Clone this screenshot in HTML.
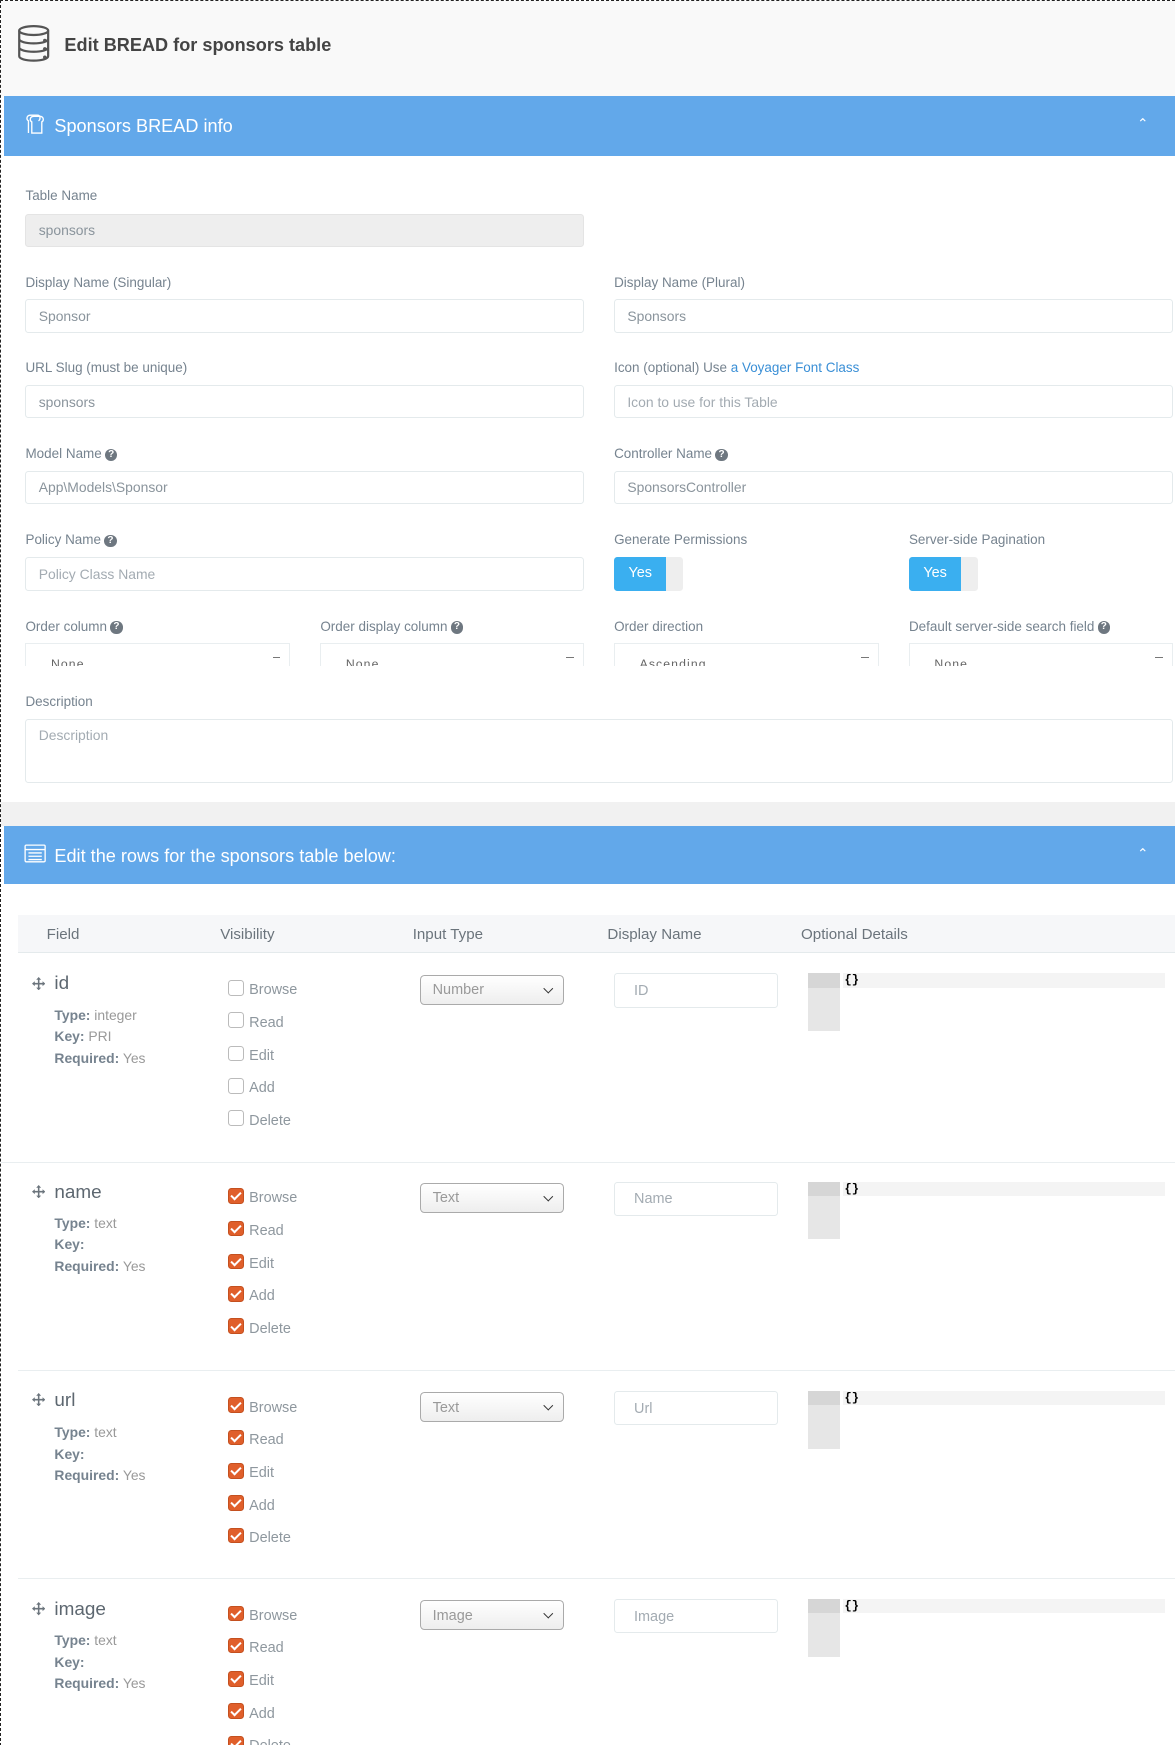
<!DOCTYPE html>
<html><head><meta charset="utf-8">
<style>
*{box-sizing:border-box;margin:0;padding:0}
html,body{width:1175px;height:1745px;overflow:hidden;background:#fff}
#w{zoom:1.1127;position:relative;width:1056px;height:1569px;font-family:"Liberation Sans",sans-serif;color:#76838f;background:#fff;border-left:1px dashed #222;border-top:1px dashed #222;overflow:hidden}
.a{position:absolute}
.lbl{position:absolute;font-size:12.1px;color:#76838f;white-space:nowrap}
.inp{position:absolute;height:30px;border:1px solid #e4eaec;border-radius:3px;background:#fff;font-size:12.5px;color:#8a949c;padding:7px 11px;white-space:nowrap}
.bar{position:absolute;left:3px;right:0;height:54px;background:#62a8ea;color:#fff;font-size:16.3px}
.q{display:inline-block;width:11px;height:11px;border-radius:50%;background:#6e7780;color:#fff;font-size:9px;font-weight:bold;text-align:center;line-height:11px;vertical-align:1px;margin-left:3px}
.sel{position:absolute;height:21px;border:1px solid #e9eef0;border-bottom:none;background:#fff;overflow:hidden}
.sel span{position:absolute;left:22px;top:12px;font-size:11px;color:#666;letter-spacing:1px}
.sel i{position:absolute;right:8px;top:12px;width:7px;border-top:1px solid #777}
.th{position:absolute;top:831px;font-size:13.6px;color:#6b747c}
.fn{position:absolute;font-size:17px;color:#5d6770}
.meta{position:absolute;font-size:12.5px;color:#999;line-height:19.5px}
.meta b{color:#76838f;font-weight:bold}
.cb{position:absolute;font-size:13px;color:#8e979e}
.cb i{position:absolute;left:-19px;top:-2px;width:14px;height:14px;border:1px solid #bbb;border-radius:3px;background:#fff}
.cb i.c{background:#e05f2b;border-color:#c4501f}
.cb i.c:after{content:"";position:absolute;left:4px;top:1px;width:4px;height:7px;border:solid #fff;border-width:0 2px 2px 0;transform:rotate(45deg)}
.ds{position:absolute;left:377px;width:129px;height:27px;border:1px solid #aaa;border-radius:4px;background:linear-gradient(#fff,#eee);font-size:13px;color:#999;padding:6px 10px}
.ds:after{content:"";position:absolute;right:10px;top:8px;width:5px;height:5px;border:solid #333;border-width:0 1.5px 1.5px 0;transform:rotate(45deg)}
.dn{position:absolute;left:551px;width:147px;height:31px;border:1px solid #e4eaec;border-radius:3px;font-size:13px;color:#a3abb2;padding:8px 17px}
.ed{position:absolute;left:725px;width:321px;height:52px}
.ed .g1{position:absolute;left:0;top:0;width:29px;height:13px;background:#d6d6d6}
.ed .g2{position:absolute;left:0;top:13px;width:29px;height:39px;background:#e6e6e6}
.ed .ln{position:absolute;left:32px;top:0;right:0;height:13px;background:#f4f4f4;font-family:"Liberation Mono",monospace;font-size:11px;color:#000;line-height:13px;font-weight:bold;padding-left:1px}
.sep{position:absolute;left:15px;right:0;height:1px;background:#e9eef0}
</style></head><body><div id="w">

<div class="a" style="left:0;top:0;width:1056px;height:85px;background:#f9f9f9"></div>
<svg class="a" style="left:14px;top:22px" width="30" height="33" viewBox="0 0 30 33" fill="none" stroke="#555" stroke-width="2"><ellipse cx="15" cy="5" rx="13" ry="4"/><path d="M2 5v23c0 2.5 6 4 13 4s13-1.5 13-4V5M2 12.5c0 2.5 6 4 13 4s13-1.5 13-4M2 20c0 2.5 6 4 13 4s13-1.5 13-4"/><circle cx="25" cy="14" r=".6" fill="#555"/><circle cx="25" cy="21.5" r=".6" fill="#555"/><circle cx="25" cy="29" r=".6" fill="#555"/></svg>
<div class="a" style="left:57px;top:31px;font-size:16.3px;font-weight:bold;color:#444">Edit BREAD for sponsors table</div>

<div class="bar" style="top:85px">
<svg class="a" style="left:18px;top:16px" width="20" height="20" viewBox="0 0 20 20" fill="none" stroke="#fff" stroke-width="1.2"><path d="M4 18V7C2 6 2 2 6 2h6c3 0 3 4 1 5"/><path d="M7 18V8C5 7 5 3 9 3h5c4 0 4 4 2 5v10z"/></svg>
<div class="a" style="left:45px;top:18px">Sponsors BREAD info</div>
<div class="a" style="right:24px;top:18px;font-size:12px">&#8963;</div>
</div>

<div class="lbl" style="left:22px;top:168px">Table Name</div>
<div class="inp" style="left:22px;top:191px;width:502px;background:#eee;border-color:#e4e4e4">sponsors</div>

<div class="lbl" style="left:22px;top:246px">Display Name (Singular)</div>
<div class="inp" style="left:22px;top:268px;width:502px">Sponsor</div>
<div class="lbl" style="left:551px;top:246px">Display Name (Plural)</div>
<div class="inp" style="left:551px;top:268px;width:502px">Sponsors</div>

<div class="lbl" style="left:22px;top:323px">URL Slug (must be unique)</div>
<div class="inp" style="left:22px;top:345px;width:502px">sponsors</div>
<div class="lbl" style="left:551px;top:323px">Icon (optional) Use <span style="color:#3a8fd6">a Voyager Font Class</span></div>
<div class="inp" style="left:551px;top:345px;width:502px;color:#a3abb2">Icon to use for this Table</div>

<div class="lbl" style="left:22px;top:400px">Model Name<span class="q">?</span></div>
<div class="inp" style="left:22px;top:422px;width:502px">App\Models\Sponsor</div>
<div class="lbl" style="left:551px;top:400px">Controller Name<span class="q">?</span></div>
<div class="inp" style="left:551px;top:422px;width:502px">SponsorsController</div>

<div class="lbl" style="left:22px;top:477px">Policy Name<span class="q">?</span></div>
<div class="inp" style="left:22px;top:500px;width:502px;color:#a3abb2">Policy Class Name</div>
<div class="lbl" style="left:551px;top:477px">Generate Permissions</div>
<div class="a" style="left:551px;top:500px;width:62px;height:30px;background:#eee;border-radius:3px"></div>
<div class="a" style="left:551px;top:500px;width:47px;height:30px;background:#3aaff0;border-radius:3px 0 0 3px;color:#fff;font-size:13px;text-align:center;line-height:30px">Yes</div>
<div class="lbl" style="left:816px;top:477px">Server-side Pagination</div>
<div class="a" style="left:816px;top:500px;width:62px;height:30px;background:#eee;border-radius:3px"></div>
<div class="a" style="left:816px;top:500px;width:47px;height:30px;background:#3aaff0;border-radius:3px 0 0 3px;color:#fff;font-size:13px;text-align:center;line-height:30px">Yes</div>

<div class="lbl" style="left:22px;top:555px">Order column<span class="q">?</span></div>
<div class="sel" style="left:22px;top:577px;width:238px"><span>None</span><i></i></div>
<div class="lbl" style="left:287px;top:555px">Order display column<span class="q">?</span></div>
<div class="sel" style="left:287px;top:577px;width:237px"><span>None</span><i></i></div>
<div class="lbl" style="left:551px;top:555px">Order direction</div>
<div class="sel" style="left:551px;top:577px;width:238px"><span>Ascending</span><i></i></div>
<div class="lbl" style="left:816px;top:555px">Default server-side search field<span class="q">?</span></div>
<div class="sel" style="left:816px;top:577px;width:237px"><span>None</span><i></i></div>

<div class="lbl" style="left:22px;top:623px">Description</div>
<div class="inp" style="left:22px;top:645px;width:1031px;height:58px;color:#a3abb2">Description</div>

<div class="a" style="left:0;top:720px;width:1056px;height:21px;background:#f1f1f1"></div>

<div class="bar" style="top:741px;height:53px">
<svg class="a" style="left:18px;top:17px" width="20" height="18" viewBox="0 0 20 18" fill="none" stroke="#fff" stroke-width="1.2"><rect x="1" y="1" width="18" height="15" rx="1"/><path d="M1 5h18M4 8h12M4 11h12M4 14h12"/></svg>
<div class="a" style="left:45px;top:18px">Edit the rows for the sponsors table below:</div>
<div class="a" style="right:24px;top:18px;font-size:12px">&#8963;</div>
</div>

<div class="a" style="left:15px;top:821px;width:1041px;height:35px;background:#f6f7f9;border-bottom:1px solid #e4eaec"></div>
<div class="th" style="left:41px">Field</div>
<div class="th" style="left:197px">Visibility</div>
<div class="th" style="left:370px">Input Type</div>
<div class="th" style="left:545px">Display Name</div>
<div class="th" style="left:719px">Optional Details</div>

<!-- row 1 -->
<svg class="a" style="left:28px;top:877px" width="12" height="12" viewBox="0 0 12 12" fill="#6b747c"><path d="M6 0l2.2 2.5H6.7v2.8h2.8V3.8L12 6 9.5 8.2V6.7H6.7v2.8h1.5L6 12 3.8 9.5h1.5V6.7H2.5v1.5L0 6l2.5-2.2v1.5h2.8V2.5H3.8z"/></svg>
<div class="fn" style="left:48px;top:874px">id</div>
<div class="meta" style="left:48px;top:902px"><b>Type:</b> integer<br><b>Key:</b> PRI<br><b>Required:</b> Yes</div>
<div class="cb" style="left:223px;top:882px"><i></i>Browse</div>
<div class="cb" style="left:223px;top:911px"><i></i>Read</div>
<div class="cb" style="left:223px;top:941px"><i></i>Edit</div>
<div class="cb" style="left:223px;top:970px"><i></i>Add</div>
<div class="cb" style="left:223px;top:999px"><i></i>Delete</div>
<div class="ds" style="top:875px">Number</div>
<div class="dn" style="top:874px">ID</div>
<div class="ed" style="top:874px"><div class="g1"></div><div class="g2"></div><div class="ln">{}</div></div>
<div class="sep" style="top:1043px;left:0"></div>

<!-- row 2 -->
<svg class="a" style="left:28px;top:1064px" width="12" height="12" viewBox="0 0 12 12" fill="#6b747c"><path d="M6 0l2.2 2.5H6.7v2.8h2.8V3.8L12 6 9.5 8.2V6.7H6.7v2.8h1.5L6 12 3.8 9.5h1.5V6.7H2.5v1.5L0 6l2.5-2.2v1.5h2.8V2.5H3.8z"/></svg>
<div class="fn" style="left:48px;top:1061px">name</div>
<div class="meta" style="left:48px;top:1089px"><b>Type:</b> text<br><b>Key:</b><br><b>Required:</b> Yes</div>
<div class="cb" style="left:223px;top:1069px"><i class="c"></i>Browse</div>
<div class="cb" style="left:223px;top:1098px"><i class="c"></i>Read</div>
<div class="cb" style="left:223px;top:1128px"><i class="c"></i>Edit</div>
<div class="cb" style="left:223px;top:1157px"><i class="c"></i>Add</div>
<div class="cb" style="left:223px;top:1186px"><i class="c"></i>Delete</div>
<div class="ds" style="top:1062px">Text</div>
<div class="dn" style="top:1061px">Name</div>
<div class="ed" style="top:1061px"><div class="g1"></div><div class="g2"></div><div class="ln">{}</div></div>
<div class="sep" style="top:1230px"></div>

<!-- row 3 -->
<svg class="a" style="left:28px;top:1251px" width="12" height="12" viewBox="0 0 12 12" fill="#6b747c"><path d="M6 0l2.2 2.5H6.7v2.8h2.8V3.8L12 6 9.5 8.2V6.7H6.7v2.8h1.5L6 12 3.8 9.5h1.5V6.7H2.5v1.5L0 6l2.5-2.2v1.5h2.8V2.5H3.8z"/></svg>
<div class="fn" style="left:48px;top:1248px">url</div>
<div class="meta" style="left:48px;top:1277px"><b>Type:</b> text<br><b>Key:</b><br><b>Required:</b> Yes</div>
<div class="cb" style="left:223px;top:1257px"><i class="c"></i>Browse</div>
<div class="cb" style="left:223px;top:1286px"><i class="c"></i>Read</div>
<div class="cb" style="left:223px;top:1316px"><i class="c"></i>Edit</div>
<div class="cb" style="left:223px;top:1345px"><i class="c"></i>Add</div>
<div class="cb" style="left:223px;top:1374px"><i class="c"></i>Delete</div>
<div class="ds" style="top:1250px">Text</div>
<div class="dn" style="top:1249px">Url</div>
<div class="ed" style="top:1249px"><div class="g1"></div><div class="g2"></div><div class="ln">{}</div></div>
<div class="sep" style="top:1417px"></div>

<!-- row 4 -->
<svg class="a" style="left:28px;top:1439px" width="12" height="12" viewBox="0 0 12 12" fill="#6b747c"><path d="M6 0l2.2 2.5H6.7v2.8h2.8V3.8L12 6 9.5 8.2V6.7H6.7v2.8h1.5L6 12 3.8 9.5h1.5V6.7H2.5v1.5L0 6l2.5-2.2v1.5h2.8V2.5H3.8z"/></svg>
<div class="fn" style="left:48px;top:1436px">image</div>
<div class="meta" style="left:48px;top:1464px"><b>Type:</b> text<br><b>Key:</b><br><b>Required:</b> Yes</div>
<div class="cb" style="left:223px;top:1444px"><i class="c"></i>Browse</div>
<div class="cb" style="left:223px;top:1473px"><i class="c"></i>Read</div>
<div class="cb" style="left:223px;top:1503px"><i class="c"></i>Edit</div>
<div class="cb" style="left:223px;top:1532px"><i class="c"></i>Add</div>
<div class="cb" style="left:223px;top:1561px"><i class="c"></i>Delete</div>
<div class="ds" style="top:1437px">Image</div>
<div class="dn" style="top:1436px">Image</div>
<div class="ed" style="top:1436px"><div class="g1"></div><div class="g2"></div><div class="ln">{}</div></div>

</div></body></html>
